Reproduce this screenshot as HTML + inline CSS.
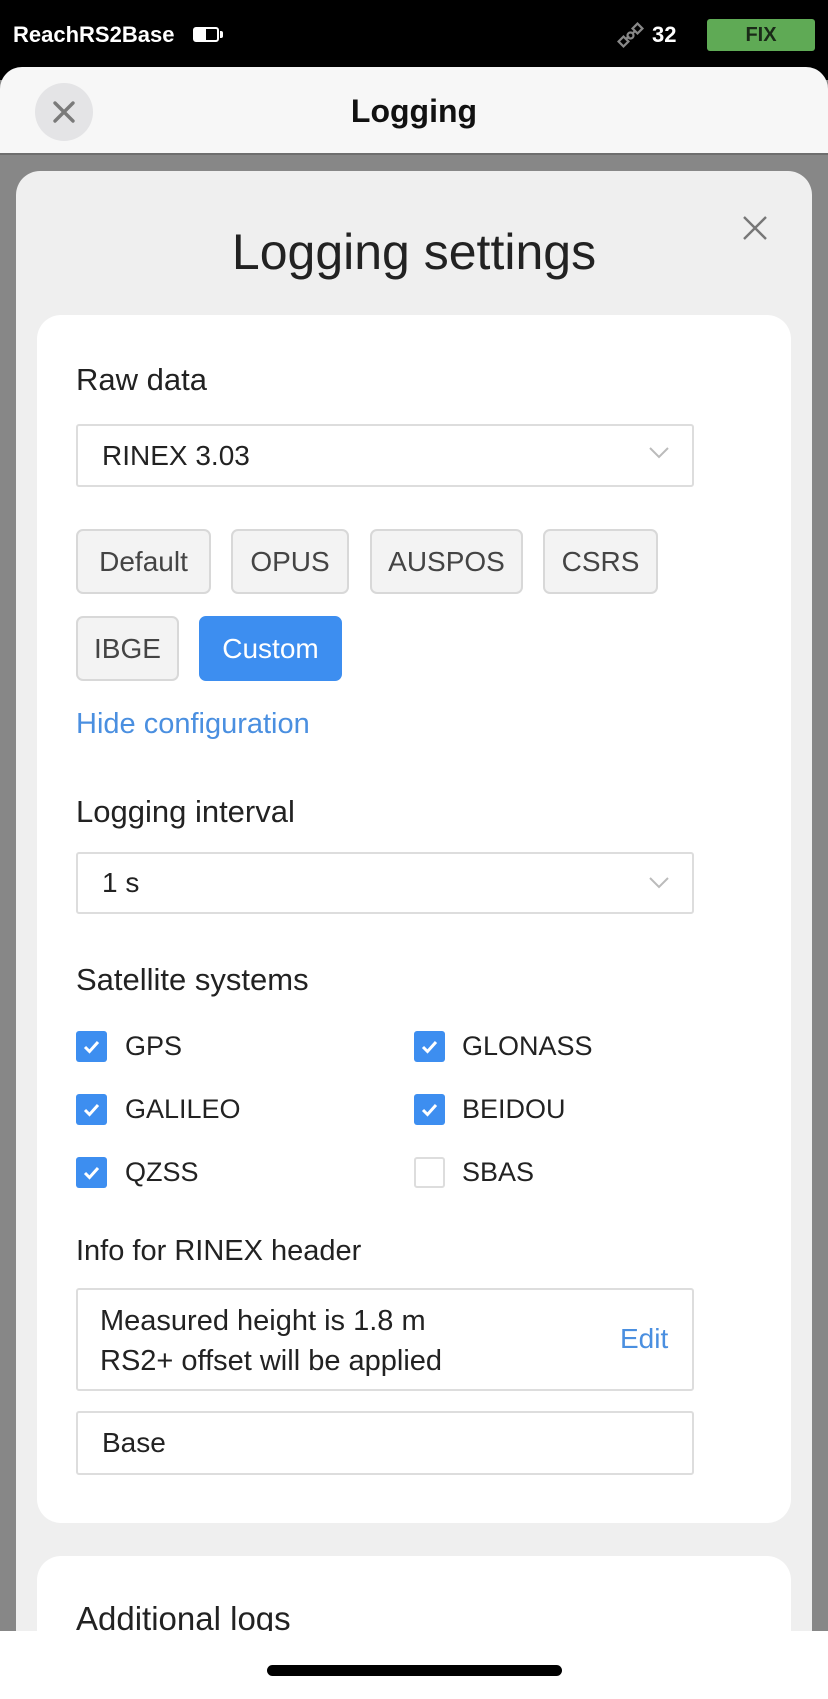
<!DOCTYPE html>
<html><head><meta charset="utf-8"><style>
*{box-sizing:border-box;margin:0;padding:0}
html,body{width:828px;height:1699px;overflow:hidden}
body{font-family:"Liberation Sans",sans-serif;color:#222}
#w{position:relative;width:828px;height:1699px;overflow:hidden;background:#878787}
.abs{position:absolute}
.status{left:0;top:0;width:828px;height:80px;background:#000}
.hdr{left:0;top:67px;width:828px;height:88px;background:#f7f7f7;border-radius:22px 22px 0 0;border-bottom:2px solid #6e6e6e}
.modal{left:16px;top:171px;width:796px;height:1528px;background:#efefef;border-radius:24px 24px 0 0}
.card{background:#fff;border-radius:24px;left:37px;width:754px}
.lbl{font-size:31px;color:#222;left:76px}
.sel{left:76px;width:618px;border:2px solid #ddd;border-radius:3px;background:#fff;font-size:28px;color:#222;padding-left:24px;display:flex;align-items:center}
.btn{height:65px;border:2px solid #d8d8d8;border-radius:7px;background:#f3f3f3;color:#444;font-size:28px;display:flex;align-items:center;justify-content:center}
.cb{width:31px;height:31px;border-radius:3px;background:#3d8ef0}
.cb svg{display:block}
.cbl{font-size:27px;color:#222}
</style></head><body><div id="w">
<div class="abs status"></div>
<div class="abs" style="left:13px;top:22px;color:#fff;font-size:22px;font-weight:bold">ReachRS2Base</div>
<div class="abs" style="left:193px;top:27px;width:26px;height:15px;border:2px solid #fff;border-radius:3px"><div style="width:11px;height:11px;background:#fff"></div></div>
<div class="abs" style="left:220px;top:31px;width:3px;height:7px;background:#fff;border-radius:0 2px 2px 0"></div>
<svg class="abs" style="left:617px;top:22px" width="28" height="28" viewBox="0 0 28 28" fill="none" stroke="#888" stroke-width="2.2"><rect x="3" y="16" width="7" height="7" transform="rotate(-45 6.5 19.5)"/><rect x="17" y="3" width="7" height="7" transform="rotate(-45 20.5 6.5)"/><path d="M9 17 L12 14 M16 11 L18 9"/><circle cx="13.5" cy="13.5" r="3"/></svg>
<div class="abs" style="left:652px;top:22px;color:#fff;font-size:22px;font-weight:bold">32</div>
<div class="abs" style="left:707px;top:19px;width:108px;height:32px;background:#5faa55;border-radius:3px;color:#1a2a18;font-size:20px;font-weight:bold;display:flex;align-items:center;justify-content:center">FIX</div>

<div class="abs hdr"></div>
<div class="abs" style="left:35px;top:83px;width:58px;height:58px;border-radius:50%;background:#e4e4e6"></div>
<svg class="abs" style="left:52px;top:100px" width="24" height="24" viewBox="0 0 24 24" stroke="#7a7a7a" stroke-width="3.4" stroke-linecap="round"><path d="M3 3L21 21M21 3L3 21"/></svg>
<div class="abs" style="left:0;width:828px;top:93px;text-align:center;font-size:32px;font-weight:bold;color:#111">Logging</div>

<div class="abs modal"></div>
<svg class="abs" style="left:743px;top:216px" width="24" height="24" viewBox="0 0 24 24" stroke="#777" stroke-width="2.4"><path d="M1 1L23 23M23 1L1 23"/></svg>
<div class="abs" style="left:0;width:828px;top:223px;text-align:center;font-size:50px;color:#222">Logging settings</div>

<div class="abs card" style="top:315px;height:1208px"></div>
<div class="abs lbl" style="top:362px">Raw data</div>
<div class="abs sel" style="top:424px;height:63px">RINEX 3.03</div>
<svg class="abs" style="left:648px;top:446px" width="22" height="14" viewBox="0 0 22 14" fill="none" stroke="#bbb" stroke-width="2"><path d="M2 2L11 11L20 2"/></svg>

<div class="abs btn" style="left:76px;top:529px;width:135px">Default</div>
<div class="abs btn" style="left:231px;top:529px;width:118px">OPUS</div>
<div class="abs btn" style="left:370px;top:529px;width:153px">AUSPOS</div>
<div class="abs btn" style="left:543px;top:529px;width:115px">CSRS</div>
<div class="abs btn" style="left:76px;top:616px;width:103px">IBGE</div>
<div class="abs btn" style="left:199px;top:616px;width:143px;background:#3d8ef0;border-color:#3d8ef0;color:#fff">Custom</div>
<div class="abs" style="left:76px;top:708px;font-size:29px;color:#4a8fe0">Hide configuration</div>

<div class="abs lbl" style="top:794px">Logging interval</div>
<div class="abs sel" style="top:852px;height:62px">1 s</div>
<svg class="abs" style="left:648px;top:876px" width="22" height="14" viewBox="0 0 22 14" fill="none" stroke="#bbb" stroke-width="2"><path d="M2 2L11 11L20 2"/></svg>

<div class="abs lbl" style="top:962px">Satellite systems</div>

<div class="abs cb" style="left:76px;top:1031px"><svg width="31" height="31" viewBox="0 0 31 31" fill="none" stroke="#fff" stroke-width="3"><path d="M9 16L13.5 20.5L22 11"/></svg></div>
<div class="abs cbl" style="left:125px;top:1031px">GPS</div>
<div class="abs cb" style="left:414px;top:1031px"><svg width="31" height="31" viewBox="0 0 31 31" fill="none" stroke="#fff" stroke-width="3"><path d="M9 16L13.5 20.5L22 11"/></svg></div>
<div class="abs cbl" style="left:462px;top:1031px">GLONASS</div>
<div class="abs cb" style="left:76px;top:1094px"><svg width="31" height="31" viewBox="0 0 31 31" fill="none" stroke="#fff" stroke-width="3"><path d="M9 16L13.5 20.5L22 11"/></svg></div>
<div class="abs cbl" style="left:125px;top:1094px">GALILEO</div>
<div class="abs cb" style="left:414px;top:1094px"><svg width="31" height="31" viewBox="0 0 31 31" fill="none" stroke="#fff" stroke-width="3"><path d="M9 16L13.5 20.5L22 11"/></svg></div>
<div class="abs cbl" style="left:462px;top:1094px">BEIDOU</div>
<div class="abs cb" style="left:76px;top:1157px"><svg width="31" height="31" viewBox="0 0 31 31" fill="none" stroke="#fff" stroke-width="3"><path d="M9 16L13.5 20.5L22 11"/></svg></div>
<div class="abs cbl" style="left:125px;top:1157px">QZSS</div>
<div class="abs cb" style="left:414px;top:1157px;background:#fff;border:2px solid #ddd"></div>
<div class="abs cbl" style="left:462px;top:1157px">SBAS</div>

<div class="abs" style="left:76px;top:1235px;font-size:29px;color:#222">Info for RINEX header</div>
<div class="abs" style="left:76px;top:1288px;width:618px;height:103px;border:2px solid #ddd;border-radius:3px"></div>
<div class="abs" style="left:100px;top:1301px;font-size:29px;color:#222;line-height:40px">Measured height is 1.8 m<br>RS2+ offset will be applied</div>
<div class="abs" style="left:620px;top:1323px;font-size:28px;color:#4a8fe0">Edit</div>
<div class="abs sel" style="top:1411px;height:64px">Base</div>

<div class="abs card" style="top:1556px;height:143px;border-radius:24px 24px 0 0"></div>
<div class="abs lbl" style="top:1600px;font-size:33px">Additional logs</div>

<div class="abs" style="left:0;top:1631px;width:828px;height:68px;background:#fff"></div>
<div class="abs" style="left:267px;top:1665px;width:295px;height:11px;border-radius:6px;background:#000"></div>
</div></body></html>
